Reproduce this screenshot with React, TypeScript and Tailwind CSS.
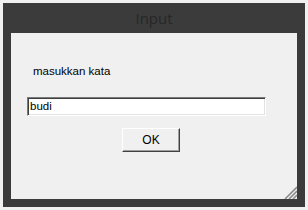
export default function App() {
  return (
    <div className="w-[308px] h-[210px] bg-[#f0f0f0] p-[3px]">
      <div className="h-full flex flex-col bg-[#3b3b3b]">
        {/* Title bar */}
        <div className="h-[30px] flex items-center justify-center">
          <span className="text-[15px] text-[#272727] font-['Open_Sans',sans-serif] leading-none">
            Input
          </span>
        </div>

        {/* Client area */}
        <div className="relative flex-1 mx-[8px] mb-[8px] bg-[#f0f0f0] font-['Liberation_Sans',Arial,sans-serif]">
          <div className="pt-[32px] pl-[22px] text-[11.5px] leading-[13px] text-black">
            masukkan kata
          </div>

          <div className="mt-[19px] ml-[16px] w-[239px] h-[19px] bg-white border border-t-[#7a7a7a] border-l-[#7a7a7a] border-r-white border-b-white shadow-[inset_1px_1px_0_#3f3f3f,inset_-1px_-1px_0_#e3e3e3] flex items-center pl-[2px]">
            <span className="text-[11.5px] leading-none text-black">budi</span>
          </div>

          <div className="mt-[12px] ml-[111px] w-[58px] h-[24px] bg-[#f0f0f0] border border-t-white border-l-white border-r-[#404040] border-b-[#404040] shadow-[inset_-1px_-1px_0_#a0a0a0] flex items-center justify-center">
            <span className="text-[12px] leading-none text-black">OK</span>
          </div>

          {/* Resize grip */}
          <svg className="absolute right-0 bottom-0" width="13" height="13" viewBox="0 0 13 13">
            <g stroke="#8a8a8a" strokeWidth="1.6">
              <line x1="13" y1="1" x2="1" y2="13" />
              <line x1="13" y1="5" x2="5" y2="13" />
              <line x1="13" y1="9" x2="9" y2="13" />
            </g>
          </svg>
        </div>
      </div>
    </div>
  )
}
